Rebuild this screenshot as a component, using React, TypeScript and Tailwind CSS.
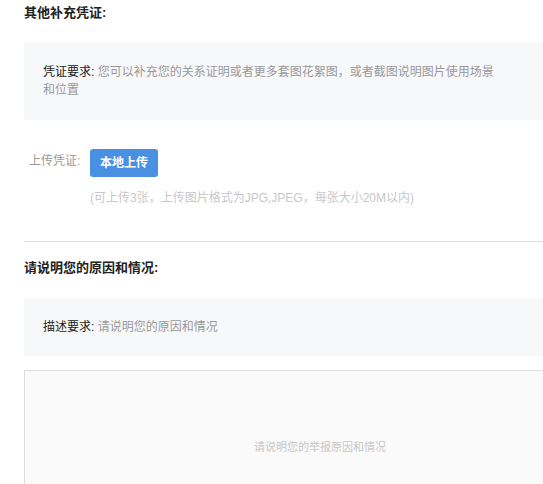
export default function App() {
  return (
    <div className="w-full overflow-hidden bg-white font-['Liberation_Sans','Noto_Sans_CJK_SC',sans-serif]">
      <div className="ml-[24px] flex w-[592px] flex-col pt-[4px]">
        <h2 className="text-[13px] font-bold leading-[18px] text-[#222]">其他补充凭证:</h2>

        <div className="mt-[20px] bg-[#f7f8fa] px-[19px] py-[21px]">
          <p className="w-[462px] text-[12px] leading-[18px]">
            <span className="text-[#222]">凭证要求: </span>
            <span className="text-[#999]">您可以补充您的关系证明或者更多套图花絮图，或者截图说明图片使用场景和位置</span>
          </p>
        </div>

        <div className="mt-[29px] flex items-start">
          <span className="ml-[5px] mt-[3px] w-[61px] text-[12px] leading-[18px] text-[#999]">上传凭证:</span>
          <button className="h-[28px] w-[68px] rounded-[3px] bg-[#4a90e2] text-[12px] font-bold text-white">
            本地上传
          </button>
        </div>
        <p className="ml-[66px] mt-[12px] text-[12px] leading-[18px] text-[#c8c8c8]">
          (可上传3张，上传图片格式为JPG,JPEG，每张大小20M以内)
        </p>

        <div className="mt-[34px] h-px bg-[#dddddd]" />

        <h2 className="mt-[17px] text-[13px] font-bold leading-[18px] text-[#222]">请说明您的原因和情况:</h2>

        <div className="mt-[21px] bg-[#f7f8fa] px-[19px] py-[20px]">
          <p className="text-[12px] leading-[18px]">
            <span className="text-[#222]">描述要求: </span>
            <span className="text-[#999]">请说明您的原因和情况</span>
          </p>
        </div>

        <div className="mt-[14px] flex h-[154px] items-center justify-center border border-[#dddddd] bg-[#fafafa]">
          <span className="text-[11px] leading-[16px] text-[#c8c8c8]">请说明您的举报原因和情况</span>
        </div>
      </div>
    </div>
  );
}
